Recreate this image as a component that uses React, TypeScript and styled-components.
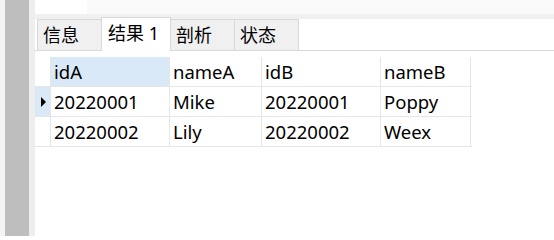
import React from "react";
import styled, { createGlobalStyle } from "styled-components";

const Global = createGlobalStyle`
  html, body { margin: 0; padding: 0; background: #ffffff; }
  body { font-family: "Noto Sans", "Noto Sans CJK SC", sans-serif; color: #000; }
`;

const Screen = styled.div`
  display: flex;
  width: 554px;
  height: 236px;
  overflow: hidden;
`;

const Edge = styled.div<{ $w: number; $bg: string }>`
  width: ${(p) => p.$w}px;
  flex: none;
  background: ${(p) => p.$bg};
`;

const Main = styled.div`
  flex: 1;
  display: flex;
  flex-direction: column;
  min-width: 0;
`;

const TopArea = styled.div`
  height: 14px;
  display: flex;
  background: #f9f9f9;
`;

const TopWhite = styled.div`
  width: 52px;
  background: #ffffff;
`;

const TabBar = styled.div`
  height: 36px;
  display: flex;
  align-items: flex-end;
  padding-left: 2px;
  background: linear-gradient(#f0f0f0 0 5px, #ffffff 5px);
  border-bottom: 1px solid #d9d9d9;
`;

const Tab = styled.div<{ $active?: boolean }>`
  box-sizing: border-box;
  width: ${(p) => (p.$active ? 70 : 65)}px;
  height: ${(p) => (p.$active ? 34 : 31)}px;
  margin-left: -1px;
  margin-bottom: ${(p) => (p.$active ? -1 : 0)}px;
  border: 1px solid #d9d9d9;
  border-bottom: none;
  background: ${(p) => (p.$active ? "#ffffff" : "#f0f0f0")};
  position: relative;
  z-index: ${(p) => (p.$active ? 1 : 0)};
  padding: 6px 0 0 ${(p) => (p.$active ? 6 : 5)}px;
  font-size: 18px;
  line-height: 19px;
  white-space: nowrap;
  &:first-child { margin-left: 0; }
`;

const Content = styled.div`
  flex: 1;
  padding-top: 6px;
`;

const Grid = styled.div`
  display: flex;
  flex-direction: column;
  width: 437px;
`;

const Row = styled.div`
  display: grid;
  grid-template-columns: 16px 119px 92px 119px 90px;
  height: 30px;
  box-sizing: border-box;
  border-bottom: 1px solid #e6e6e6;
`;

const Cell = styled.div<{ $selected?: boolean }>`
  box-sizing: border-box;
  border-right: 1px solid #e6e6e6;
  background: ${(p) => (p.$selected ? "#d9e9f7" : "#ffffff")};
  padding-left: 3px;
  font-size: 18.5px;
  display: flex;
  align-items: center;
  white-space: nowrap;
`;

const Indicator = styled.div<{ $current?: boolean }>`
  box-sizing: border-box;
  border-right: 1px solid #e6e6e6;
  background: ${(p) => (p.$current ? "#d9e9f7" : "#ffffff")};
  display: flex;
  align-items: center;
  padding-left: 6px;
`;

const Arrow = styled.div`
  width: 0;
  height: 0;
  border-top: 5px solid transparent;
  border-bottom: 5px solid transparent;
  border-left: 5px solid #000;
`;

const columns = ["idA", "nameA", "idB", "nameB"];
const rows = [
  ["20220001", "Mike", "20220001", "Poppy"],
  ["20220002", "Lily", "20220002", "Weex"],
];

export default function App() {
  return (
    <>
      <Global />
      <Screen>
        <Edge $w={5} $bg="#f4f4f4" />
        <Edge $w={24} $bg="#bebebe" />
        <Edge $w={6} $bg="#eeeeee" />
        <Main>
          <TopArea>
            <TopWhite />
          </TopArea>
          <TabBar>
            <Tab>信息</Tab>
            <Tab $active>结果 1</Tab>
            <Tab>剖析</Tab>
            <Tab>状态</Tab>
          </TabBar>
          <Content>
            <Grid>
              <Row>
                <Indicator />
                {columns.map((c, i) => (
                  <Cell key={c} $selected={i === 0}>
                    {c}
                  </Cell>
                ))}
              </Row>
              {rows.map((r, ri) => (
                <Row key={ri}>
                  <Indicator $current={ri === 0}>{ri === 0 && <Arrow />}</Indicator>
                  {r.map((v, ci) => (
                    <Cell key={ci}>{v}</Cell>
                  ))}
                </Row>
              ))}
            </Grid>
          </Content>
        </Main>
      </Screen>
    </>
  );
}
